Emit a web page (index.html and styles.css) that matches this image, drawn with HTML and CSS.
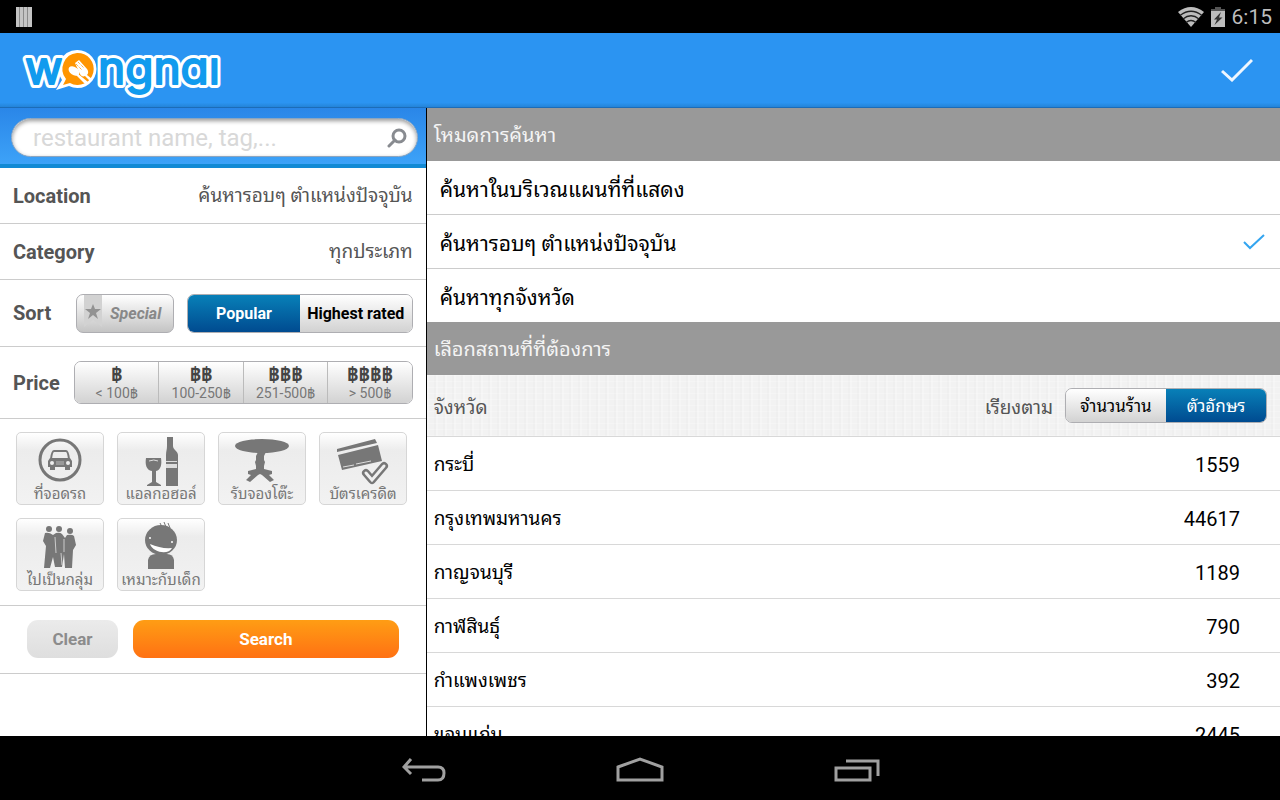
FILE: index.html
```html
<!DOCTYPE html>
<html lang="th">
<head>
  <meta charset="UTF-8">
  <title>Wongnai - Search</title>
  <meta name="viewport" content="width=device-width, initial-scale=1.0">
  <link rel="stylesheet" href="styles.css">
</head>
<body>

  <div class="status-bar">
    <svg class="status-note" width="16" height="20" viewBox="0 0 16 20">
      <path d="M0 0h16v20H0z" fill="#8a8a8a"/>
      <path d="M0 0h3v20H0zM4 0h3v20H4zM8 0h3v20H8zM12 0h4v20h-4z" fill="#c4c4c4"/>
    </svg>
    <div class="status-right">
      <svg width="26" height="20" viewBox="0 0 26 20">
        <path d="M0 5Q13 -5 26 5L13 20z" fill="#bdbdbd"/>
        <path d="M2 8.500Q13 0 24 8.500M5 12Q13 5.500 21 12M8 15.500Q13 11.500 18 15.500" fill="none" stroke="#222" stroke-width="1.300"/>
      </svg>
      <svg width="14" height="20" viewBox="0 0 14 20">
        <path d="M4 0h6v2h4v3H0V2h4z" fill="#555"/>
        <path d="M0 4h14v16H0z" fill="#bdbdbd"/>
        <path d="M10 5L3 12.500h3L3.500 18l8-7.500H8z" fill="#333"/>
      </svg>
      <span class="clock">6:15</span>
    </div>
  </div>

  <header>
    <a href="#" class="logo" aria-label="Wongnai">
      <svg width="208" height="72" viewBox="0 -13 208 72">
        <g class="logo-shadow">
          <text x="5" y="37">w</text>
          <text x="78" y="37">ngnaı</text>
        </g>
        <path d="M57 3a19 19 0 1 1-8 36l-13 4 6-10A19 19 0 0 1 57 3z" fill="#fff"/>
        <path d="M57 6a16 16 0 1 1-7 30l-7 2 3-6A16 16 0 0 1 57 6z" fill="#ff9500"/>
        <g class="logo-word">
          <text x="5" y="37">w</text>
          <text x="78" y="37">ngnaı</text>
        </g>
        <ellipse cx="54" cy="24" rx="6" ry="4" transform="rotate(35 54 24)" fill="#fff"/>
        <path d="M57 26l11 9-2 3-10-10z" fill="#fff"/>
        <path d="M55 16l4-3 8 9c2 3 1 5 0 6l5 4-2 2-5-5c-2 1-4 0-5-2z" fill="#fff"/>
        <path d="M56 17l6 6M58 15l6 6" stroke="#ff9500" stroke-width="1" stroke-dasharray="1 1"/>
      </svg>
    </a>
    <button class="done-btn" aria-label="Done">
      <svg width="32" height="24" viewBox="0 0 32 24">
        <path d="M1 13l10 9L31 2" fill="none" stroke="#eef6ff" stroke-width="3"/>
      </svg>
    </button>
  </header>

  <main>
    <form class="filters" onsubmit="return false">
      <div class="search-bar">
        <div class="search-box">
          <input type="text" id="search" placeholder="restaurant name, tag,..." aria-label="Search">
          <svg width="20" height="20" viewBox="0 0 20 20">
            <circle cx="12" cy="8" r="6" fill="none" stroke="#888b90" stroke-width="3"/>
            <path d="M8 12l-6 6" stroke="#888b90" stroke-width="3" stroke-linecap="round"/>
          </svg>
        </div>
      </div>

      <a href="#" class="row link-row">
        <span class="row-label">Location</span>
        <span class="row-value">ค้นหารอบๆ ตำแหน่งปัจจุบัน</span>
      </a>
      <a href="#" class="row link-row">
        <span class="row-label">Category</span>
        <span class="row-value">ทุกประเภท</span>
      </a>

      <div class="row sort-row">
        <span class="row-label">Sort</span>
        <button type="button" class="special-btn">
          <svg width="18" height="32" viewBox="0 0 18 32">
            <path d="M0 0h18v32l-9-7-9 7z" fill="#d2d2d2"/>
            <path d="M9 9l2 5h6l-5 4 2 6-5-4-5 4 2-6-5-4h6z" fill="#929292"/>
          </svg>
          <span>Special</span>
        </button>
        <div class="segment sort-segment">
          <button type="button" class="active">Popular</button>
          <button type="button">Highest rated</button>
        </div>
      </div>

      <div class="row price-row">
        <span class="row-label">Price</span>
        <div class="segment price-segment">
          <button type="button"><b>฿</b><span>&lt; 100฿</span></button>
          <button type="button"><b>฿฿</b><span>100-250฿</span></button>
          <button type="button"><b>฿฿฿</b><span>251-500฿</span></button>
          <button type="button"><b>฿฿฿฿</b><span>&gt; 500฿</span></button>
        </div>
      </div>

      <div class="facilities">
        <button type="button">
          <svg width="60" height="50" viewBox="0 0 60 50">
            <circle cx="30" cy="27" r="20" fill="none" stroke="#777" stroke-width="3"/>
            <path d="M24 18h12q2 0 3 8H21q1-8 3-8z" fill="none" stroke="#777" stroke-width="2"/>
            <path d="M20 25h20l2 3v6h-2v3h-5v-3H25v3h-5v-3h-2v-6z" fill="#777"/>
            <circle cx="22" cy="30" r="2" fill="#eee"/>
            <circle cx="38" cy="30" r="2" fill="#eee"/>
            <path d="M26 28h8v4h-8z" fill="#999"/>
          </svg>
          <span>ที่จอดรถ</span>
        </button>
        <button type="button">
          <svg width="60" height="50" viewBox="0 0 60 50">
            <path d="M36 4h6v9c0 4 5 5 5 9v31H35V22c0-4 1-5 1-9z" fill="#777"/>
            <path d="M15 25h15c1 6 0 12-5 13v11l5 3v1H16v-1l5-3V38c-6-1-7-7-6-13z" fill="#777"/>
            <path d="M18 28q5-2 9 0" fill="none" stroke="#ddd"/>
            <path d="M35 28h11v1H35zM35 31h11v4H35z" fill="#ddd"/>
          </svg>
          <span>แอลกอฮอล์</span>
        </button>
        <button type="button">
          <svg width="60" height="50" viewBox="0 0 60 50">
            <ellipse cx="30" cy="13" rx="27" ry="7" fill="#777"/>
            <path d="M26 19h8l-2 4v4l1 2-1 4v3l8 2v3l-3 1 5 5-4 2-8-7-2-1-2 1-8 7-4-2 5-5-3-1v-3l8-2v-3l-1-4 1-2v-4z" fill="#777"/>
          </svg>
          <span>รับจองโต๊ะ</span>
        </button>
        <button type="button">
          <svg width="60" height="50" viewBox="0 0 60 50">
            <path d="M4 16L42 6l2 4L4 19zM5 22l40-10 4 16L9 37z" fill="#777"/>
            <path d="M10 34l11-2M23 31l15-3" stroke="#ddd" stroke-width="1"/>
            <path d="M33 40l6 7 12-14" fill="none" stroke="#777" stroke-width="8" stroke-linecap="round" stroke-linejoin="round"/>
            <path d="M33 40l6 7 12-14" fill="none" stroke="#efefef" stroke-width="3" stroke-linecap="round"/>
          </svg>
          <span>บัตรเครดิต</span>
        </button>
        <button type="button">
          <svg width="60" height="50" viewBox="0 0 60 50">
            <circle cx="19" cy="10" r="3" fill="#777"/>
            <circle cx="29" cy="10" r="3" fill="#777"/>
            <circle cx="40" cy="12" r="3" fill="#777"/>
            <path d="M15 14q4-1 8 2l3-2q4-1 6 1l3 4 2-3q5-1 7 1l2 9-3 5-1 18h-7l-1-14-2 13h-7l-2-10-3 11h-6l2-22-3-5z" fill="#777"/>
            <path d="M25 18l1 16M34 20v13M31 34l1 12" stroke="#ccc" stroke-width="1"/>
          </svg>
          <span>ไปเป็นกลุ่ม</span>
        </button>
        <button type="button">
          <svg width="60" height="50" viewBox="0 0 60 50">
            <path d="M31 8l-2-4M35 8l-2-5M39 9l-2-5" stroke="#777" stroke-width="1"/>
            <ellipse cx="30" cy="21" rx="16" ry="15" fill="#777"/>
            <path d="M17 50V41q1-6 8-6h11q6 0 7 6v9z" fill="#777"/>
            <circle cx="19" cy="19" r="1" fill="#fff"/>
            <circle cx="41" cy="23" r="1" fill="#fff"/>
            <path d="M19 25q11 5 22 4c-3 7-19 5-22-4z" fill="#fff"/>
          </svg>
          <span>เหมาะกับเด็ก</span>
        </button>
      </div>

      <div class="actions">
        <button type="reset" class="clear-btn">Clear</button>
        <button type="submit" class="search-btn">Search</button>
      </div>
    </form>

    <section class="options">
      <h2>โหมดการค้นหา</h2>
      <ul class="modes">
        <li><a href="#">ค้นหาในบริเวณแผนที่ที่แสดง</a></li>
        <li>
          <a href="#">ค้นหารอบๆ ตำแหน่งปัจจุบัน
            <svg width="22" height="18" viewBox="0 0 22 18">
              <path d="M1 9l6 6L21 2" fill="none" stroke="#33a5f0" stroke-width="2"/>
            </svg>
          </a>
        </li>
        <li><a href="#">ค้นหาทุกจังหวัด</a></li>
      </ul>

      <h2>เลือกสถานที่ที่ต้องการ</h2>
      <div class="province-bar">
        <span>จังหวัด</span>
        <span class="order-label">เรียงตาม</span>
        <div class="segment order-segment">
          <button type="button">จำนวนร้าน</button>
          <button type="button" class="active">ตัวอักษร</button>
        </div>
      </div>
      <table class="provinces">
        <tr><td>กระบี่</td><td>1559</td></tr>
        <tr><td>กรุงเทพมหานคร</td><td>44617</td></tr>
        <tr><td>กาญจนบุรี</td><td>1189</td></tr>
        <tr><td>กาฬสินธุ์</td><td>790</td></tr>
        <tr><td>กำแพงเพชร</td><td>392</td></tr>
        <tr><td>ขอนแก่น</td><td>2445</td></tr>
      </table>
    </section>
  </main>

  <nav class="system-nav">
    <button aria-label="Back">
      <svg width="44" height="26" viewBox="0 0 44 26">
        <path d="M9 2L2 10l7 7M2 10h34q6 0 6 6 0 7-6 7H20" fill="none" stroke="#a0a0a0" stroke-width="3"/>
      </svg>
    </button>
    <button aria-label="Home">
      <svg width="48" height="26" viewBox="0 0 48 26">
        <path d="M2 10l22-8 22 8v13H2z" fill="none" stroke="#a0a0a0" stroke-width="3"/>
      </svg>
    </button>
    <button aria-label="Recent apps">
      <svg width="46" height="26" viewBox="0 0 46 26">
        <path d="M2 11h34v12H2zM12 4h32v15" fill="none" stroke="#a0a0a0" stroke-width="3"/>
      </svg>
    </button>
  </nav>

</body>
</html>
```
FILE: styles.css
```css
* {
  box-sizing: border-box;
  margin: 0;
  padding: 0;
}

body {
  font-family: Roboto, 'Noto Sans Thai Looped', 'Noto Sans', sans-serif;
  font-size: 20px;
  color: #000;
  background-color: #fff;
  height: 100vh;
  display: flex;
  flex-direction: column;
  overflow: hidden;
}

button {
  font-family: inherit;
  border: none;
  background: none;
  cursor: pointer;
}

a {
  color: inherit;
  text-decoration: none;
}

svg {
  display: block;
  flex-shrink: 0;
}

/* Android status bar */
.status-bar {
  height: 33px;
  flex-shrink: 0;
  background-color: #000;
  color: #bdbdbd;
  display: flex;
  justify-content: space-between;
  align-items: center;
  padding: 0 8px 0 16px;
}

.status-right {
  display: flex;
  align-items: center;
  gap: 7px;
}

.clock {
  font-size: 21px;
}

header {
  height: 75px;
  flex-shrink: 0;
  background: linear-gradient(#2b94f2 94%, #2484d8);
  border-bottom: 1px solid #1c6cb8;
  display: flex;
  justify-content: space-between;
  align-items: center;
  padding: 0 27px 0 20px;
}

.logo svg {
  overflow: visible;
}

.logo text {
  font-family: Inter, sans-serif;
  font-size: 46px;
  font-weight: 400;
  font-feature-settings: "cv11";
  stroke-linejoin: round;
}

.logo-shadow {
  fill: #fff;
  stroke: #fff;
  stroke-width: 8px;
}

.logo-word {
  fill: #119bee;
  stroke: #119bee;
  stroke-width: 2px;
}

main {
  flex: 1;
  min-height: 0;
  display: grid;
  grid-template-columns: 1fr 2fr;
}

/* Left side */
.filters {
  border-right: 1px solid #000;
  color: #555;
}

.search-bar {
  height: 60px;
  background: linear-gradient(#2a86e8, #3da2f8);
  border-bottom: 4px solid #128ad4;
  padding: 10px 8px 0 11px;
}

.search-box {
  height: 39px;
  display: flex;
  align-items: center;
  background-color: #fff;
  border: 1px solid #8ba5c0;
  border-radius: 20px;
  box-shadow: inset 0 2px 4px rgba(0, 0, 0, 0.4);
  padding: 0 10px 0 21px;
}

#search {
  flex: 1;
  min-width: 0;
  font-family: inherit;
  font-size: 24px;
  border: none;
  outline: none;
  background: none;
}

#search::placeholder {
  color: #d8d8d8;
}

.row {
  display: flex;
  align-items: center;
  padding: 0 13px;
  border-bottom: 1px solid #ccc;
}

.link-row {
  height: 56px;
  justify-content: space-between;
}

.row-label {
  font-weight: bold;
}

.row-value {
  font-size: 19px;
  padding-bottom: 4px;
}

.sort-row {
  height: 67px;
}

.sort-row .row-label {
  width: 63px;
}

.special-btn {
  width: 98px;
  height: 39px;
  display: flex;
  align-items: flex-start;
  gap: 8px;
  padding-left: 7px;
  margin-right: 13px;
  font-size: 16px;
  font-weight: bold;
  font-style: italic;
  line-height: 37px;
  color: #888;
  background: linear-gradient(#fff, #c4c4c4);
  border: 1px solid #aeaeb2;
  border-radius: 7px;
}

.segment {
  display: flex;
  border: 1px solid #aeaeb2;
  border-radius: 7px;
  overflow: hidden;
}

.segment button {
  flex: 1;
  background: linear-gradient(#fff, #d2d2d2);
}

.segment .active {
  color: #fff;
  background: linear-gradient(#0880b8, #004b90);
}

.sort-segment {
  flex: 1;
  height: 39px;
}

.sort-segment button {
  font-size: 16px;
  font-weight: bold;
  white-space: nowrap;
}

.price-row {
  height: 72px;
}

.price-row .row-label {
  width: 61px;
}

.price-segment {
  flex: 1;
  height: 43px;
}

.price-segment button {
  color: #777;
  font-size: 14px;
  line-height: 16px;
}

.price-segment button + button {
  border-left: 1px solid #bbb;
}

.price-segment b {
  display: block;
  font-size: 20px;
  line-height: 20px;
  color: #444;
}

.facilities {
  display: grid;
  grid-template-columns: repeat(4, 88px);
  gap: 13px;
  padding: 13px 16px 14px;
  border-bottom: 1px solid #ccc;
}

.facilities button {
  height: 73px;
  display: flex;
  flex-direction: column;
  align-items: center;
  font-size: 15px;
  line-height: 22px;
  white-space: nowrap;
  color: #777;
  background: linear-gradient(#fff, #ececec 25%, #f2f2f2);
  border: 1px solid #d6d6d6;
  border-radius: 5px;
}

.facilities svg {
  overflow: visible;
}

.actions {
  height: 68px;
  display: flex;
  gap: 15px;
  padding: 14px 27px;
  border-bottom: 1px solid #ccc;
}

.actions button {
  height: 38px;
  font-size: 17px;
  font-weight: bold;
  border-radius: 11px;
}

.clear-btn {
  width: 91px;
  color: #8c8c8c;
  background: linear-gradient(#ebebeb, #dedede);
}

.search-btn {
  flex: 1;
  color: #fff;
  background: linear-gradient(#ff9d14, #ff7113);
}

/* Right side */
.options {
  min-height: 0;
  overflow: hidden;
}

.options h2 {
  height: 53px;
  padding: 0 7px;
  font-size: 20px;
  font-weight: normal;
  line-height: 55px;
  color: #f4f4f4;
  background-color: #999;
}

.modes {
  list-style: none;
}

.modes a {
  height: 54px;
  display: flex;
  justify-content: space-between;
  align-items: center;
  padding: 0 15px 0 13px;
  font-size: 21px;
  border-bottom: 1px solid #ccc;
}

.modes li:last-child a {
  height: 53px;
  border-bottom: none;
}

.province-bar {
  height: 62px;
  display: flex;
  align-items: center;
  padding: 0 13px 0 7px;
  font-size: 19px;
  color: #555;
  background:
    repeating-linear-gradient(90deg, rgba(255, 255, 255, 0.2) 0 2px, transparent 2px 7px, rgba(0, 0, 0, 0.01) 7px 9px),
    repeating-linear-gradient(rgba(255, 255, 255, 0.2) 0 1px, transparent 1px 6px),
    #f2f2f2;
  border-bottom: 1px solid #d8d8d8;
}

.order-label {
  margin-left: auto;
  margin-right: 12px;
}

.order-segment {
  width: 202px;
  height: 35px;
}

.order-segment button {
  font-size: 17px;
  line-height: 30px;
}

.provinces {
  width: 100%;
  border-spacing: 0;
}

.provinces td {
  height: 54px;
  padding: 0 7px 3px;
  font-size: 19px;
  border-bottom: 1px solid #d8d8d8;
}

.provinces td:last-child {
  text-align: right;
  padding: 2px 40px 0 7px;
  font-size: 20px;
}

/* Android navigation bar */
.system-nav {
  height: 64px;
  flex-shrink: 0;
  background-color: #000;
  display: flex;
  justify-content: center;
  align-items: center;
  gap: 170px;
  padding: 3px 0 0 2px;
}
```
